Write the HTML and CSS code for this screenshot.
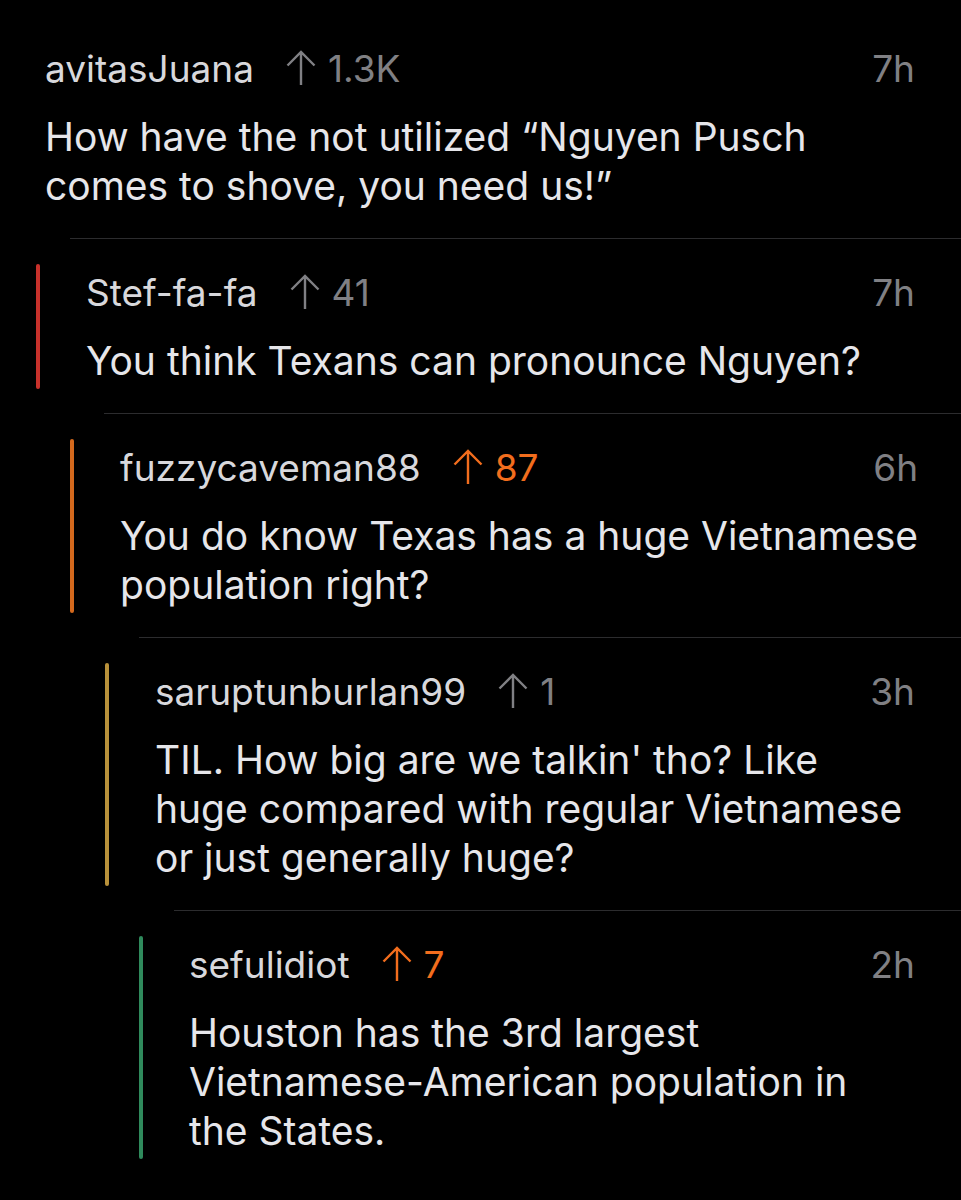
FILE: index.html
```html
<!DOCTYPE html>
<html lang="en">
<head>
    <meta charset="UTF-8">
    <meta name="viewport" content="width=device-width, initial-scale=1.0">
    <title>Comments</title>
    <link rel="stylesheet" href="styles.css">
</head>
<body>

    <div class="thread">

        <!-- top level comment -->
        <div class="comment top">
            <div class="content">
                <div class="meta">
                    <span class="author">avitasJuana</span>
                    <span class="votes">
                        <svg class="arrow" viewBox="0 0 30 36"><path d="M15 35V2M1.5 15.5L15 2l13.5 13.5"/></svg>1.3K
                    </span>
                    <span class="time">7h</span>
                </div>
                <p class="text">How have the not utilized “Nguyen Pusch<br>comes to shove, you need us!”</p>
            </div>
        </div>

        <div class="divider d1"></div>
        <div class="comment d1">
            <div class="bar red"></div>
            <div class="content">
                <div class="meta">
                    <span class="author">Stef-fa-fa</span>
                    <span class="votes">
                        <svg class="arrow" viewBox="0 0 30 36"><path d="M15 35V2M1.5 15.5L15 2l13.5 13.5"/></svg>41
                    </span>
                    <span class="time">7h</span>
                </div>
                <p class="text">You think Texans can pronounce Nguyen?</p>
            </div>
        </div>

        <div class="divider d2"></div>
        <div class="comment d2">
            <div class="bar orange"></div>
            <div class="content">
                <div class="meta">
                    <span class="author">fuzzycaveman88</span>
                    <span class="votes upvoted">
                        <svg class="arrow" viewBox="0 0 30 36"><path d="M15 35V2M1.5 15.5L15 2l13.5 13.5"/></svg>87
                    </span>
                    <span class="time">6h</span>
                </div>
                <p class="text">You do know Texas has a huge Vietnamese<br>population right?</p>
            </div>
        </div>

        <div class="divider d3"></div>
        <div class="comment d3">
            <div class="bar gold"></div>
            <div class="content">
                <div class="meta">
                    <span class="author">saruptunburlan99</span>
                    <span class="votes">
                        <svg class="arrow" viewBox="0 0 30 36"><path d="M15 35V2M1.5 15.5L15 2l13.5 13.5"/></svg>1
                    </span>
                    <span class="time">3h</span>
                </div>
                <p class="text">TIL. How big are we talkin' tho? Like<br>huge compared with regular Vietnamese<br>or just generally huge?</p>
            </div>
        </div>

        <div class="divider d4"></div>
        <div class="comment d4">
            <div class="bar green"></div>
            <div class="content">
                <div class="meta">
                    <span class="author">sefulidiot</span>
                    <span class="votes upvoted">
                        <svg class="arrow" viewBox="0 0 30 36"><path d="M15 35V2M1.5 15.5L15 2l13.5 13.5"/></svg>7
                    </span>
                    <span class="time">2h</span>
                </div>
                <p class="text">Houston has the 3rd largest<br>Vietnamese-American population in<br>the States.</p>
            </div>
        </div>

    </div>

</body>
</html>
```
FILE: styles.css
```css
body {
    margin: 0;
    background-color: #000;
    font-family: Inter, "Noto Sans", sans-serif;
    color: #e4e4e8;
}

.thread {
    padding-top: 24px;
}

.comment {
    display: flex;
    gap: 46px;
    padding: 25px 46px 24px 0;
}

.comment.top {
    padding: 24px 46px 28px 45px;
}

.comment.d1 { padding-left: 36px; }
.comment.d2 { padding-left: 70px; }
.comment.d3 { padding-left: 105px; }
.comment.d4 { padding-left: 139px; }

.divider {
    height: 1px;
    background-color: #2c2c2e;
}

.divider.d1 { margin-left: 70px; }
.divider.d2 { margin-left: 104px; }
.divider.d3 { margin-left: 139px; }
.divider.d4 { margin-left: 174px; }

.bar {
    width: 4px;
    flex-shrink: 0;
    border-radius: 2px;
}

.bar.red { background-color: #c8312b; }
.bar.orange { background-color: #d4691d; }
.bar.gold { background-color: #b8913a; }
.bar.green { background-color: #2f8a5c; }

.content {
    flex: 1;
    padding: 8px 0 4px;
}

.comment.top .content {
    padding: 0;
}

.meta {
    display: flex;
    align-items: center;
    height: 40px;
    font-size: 37px;
}

.author {
    color: #d8d8dc;
}

.votes {
    display: flex;
    align-items: center;
    margin-left: 32px;
    color: #808084;
}

.votes.upvoted {
    color: #f26d1d;
}

.arrow {
    width: 30px;
    height: 36px;
    margin-right: 12px;
    fill: none;
    stroke: currentColor;
    stroke-width: 2.4;
}

.time {
    margin-left: auto;
    color: #808084;
}

.text {
    margin: 24px 0 0;
    font-size: 39px;
    line-height: 49px;
    white-space: nowrap;
    color: #e6e6ea;
}
```
